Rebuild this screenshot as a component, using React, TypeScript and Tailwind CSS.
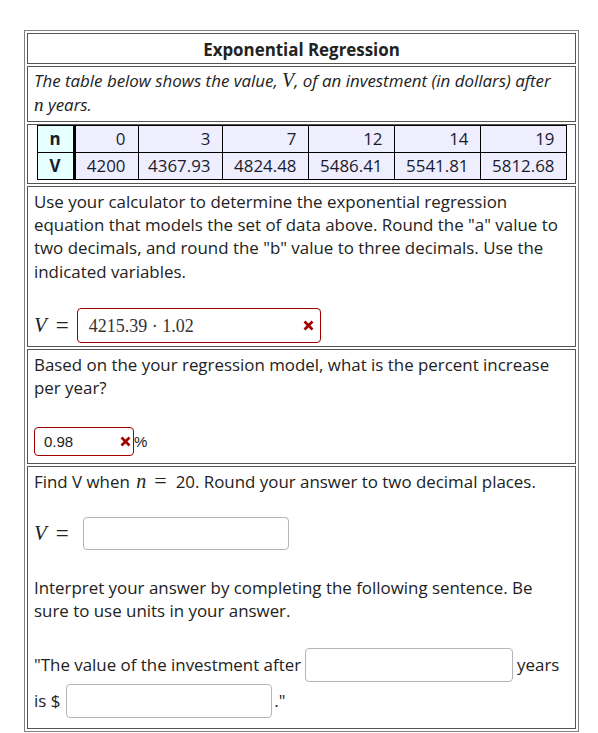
import React from "react";

const serif = "font-['Liberation_Serif',serif] leading-none";

const RedX = () => (
  <svg width="11" height="11" viewBox="0 0 11 11" className="shrink-0">
    <path d="M1.5 1.5 L9.5 9.5 M9.5 1.5 L1.5 9.5" stroke="#a00000" strokeWidth="2.6" strokeLinecap="butt" />
  </svg>
);

const Cell = ({ className = "", children }: { className?: string; children: React.ReactNode }) => (
  <div className={`border border-[#555] px-[6px] py-[3px] ${className}`}>{children}</div>
);

const ns = [0, 3, 7, 12, 14, 19];
const vs = ["4200", "4367.93", "4824.48", "5486.41", "5541.81", "5812.68"];

export default function App() {
  return (
    <div className="min-h-[733px] bg-white pl-[24px] pt-[30px] font-['Open_Sans',sans-serif] text-[16.9px] leading-[23.3px] text-[#222]">
      <div className="w-[555px] border border-[#808080] p-[2px] flex flex-col gap-[2px]">
        <Cell className="text-center font-bold pt-[4px] pb-[2px]">Exponential Regression</Cell>

        <Cell className="italic pt-[2px] pb-[5px]">
          The table below shows the value, <span className={`${serif} text-[20px]`}>V</span>, of an investment (in dollars) after
          <br />
          <span className={`${serif} text-[19px]`}>n</span> years.
        </Cell>

        <Cell className="pt-[0px] pb-[3px]">
          <table className="mx-auto w-[529px] table-fixed border-collapse text-[#1b1b2e]">
            <colgroup>
              <col className="w-[37px]" />
              <col className="w-[64px]" />
              <col className="w-[84px]" />
              <col className="w-[86px]" />
              <col className="w-[86px]" />
              <col className="w-[86px]" />
              <col className="w-[86px]" />
            </colgroup>
            <tbody>
              <tr className="h-[27px]">
                <td className="border border-black border-r-[3px] bg-[#e6ffff] text-center font-bold">n</td>
                {ns.map((n, i) => (
                  <td key={n} className={`border border-black bg-[#eeeeff] text-right ${i === 0 ? "pr-[12px]" : "pr-[11px]"}`}>
                    {n}
                  </td>
                ))}
              </tr>
              <tr className="h-[27px]">
                <td className="border border-black border-r-[3px] bg-[#e6ffff] text-center font-bold">V</td>
                {vs.map((v, i) => (
                  <td key={v} className={`border border-black bg-[#eeeeff] text-right ${i === 0 ? "pr-[12px]" : "pr-[11px]"}`}>
                    {v}
                  </td>
                ))}
              </tr>
            </tbody>
          </table>
        </Cell>

        <Cell>
          <p>
            Use your calculator to determine the exponential regression
            <br />
            equation that models the set of data above. Round the "a" value to
            <br />
            two decimals, and round the "b" value to three decimals. Use the
            <br />
            indicated variables.
          </p>
          <div className="mt-[25px] flex items-center">
            <span className={`${serif} italic text-[21px]`}>V</span>
            <span className={`${serif} ml-[9px] text-[23px]`}>=</span>
            <div className="ml-[8px] flex h-[35px] w-[244px] items-center justify-between rounded-[4px] border border-[#a00000] pl-[11px] pr-[6px]">
              <span className={`${serif} text-[18px] text-[#333]`}>4215.39 · 1.02</span>
              <RedX />
            </div>
          </div>
        </Cell>

        <Cell>
          <p>
            Based on the your regression model, what is the percent increase
            <br />
            per year?
          </p>
          <div className="mb-[4px] mt-[27px] flex items-center">
            <div className="flex h-[29px] w-[100px] items-center justify-between rounded-[4px] border border-[#a00000] pl-[9px] pr-[2px]">
              <span className="font-['Liberation_Sans',sans-serif] text-[15px] text-[#222]">0.98</span>
              <RedX />
            </div>
            <span className="font-['Liberation_Sans',sans-serif] text-[15px]">%</span>
          </div>
        </Cell>

        <Cell>
          <p>
            Find V when <span className={`${serif} ml-[2px] italic text-[20px]`}>n</span>
            <span className={`${serif} ml-[8px] text-[22px]`}>=</span>
            <span className="ml-[9px]">20. Round your answer to two decimal places.</span>
          </p>
          <div className="mt-[24px] flex items-center">
            <span className={`${serif} italic text-[21px]`}>V</span>
            <span className={`${serif} ml-[9px] text-[23px]`}>=</span>
            <div className="ml-[14px] h-[33px] w-[206px] rounded-[4px] border border-[#b5b5b5]" />
          </div>
          <p className="mt-[26px]">
            Interpret your answer by completing the following sentence. Be
            <br />
            sure to use units in your answer.
          </p>
          <div className="mt-[25px] flex items-center">
            <span>"The value of the investment after</span>
            <div className="ml-[4px] h-[34px] w-[208px] rounded-[4px] border border-[#b5b5b5]" />
            <span className="ml-[4px]">years</span>
          </div>
          <div className="mb-[7px] mt-[2px] flex items-center">
            <span>is $</span>
            <div className="ml-[6px] h-[34px] w-[206px] rounded-[4px] border border-[#b5b5b5]" />
            <span className="ml-[2px]">."</span>
          </div>
        </Cell>
      </div>
    </div>
  );
}
